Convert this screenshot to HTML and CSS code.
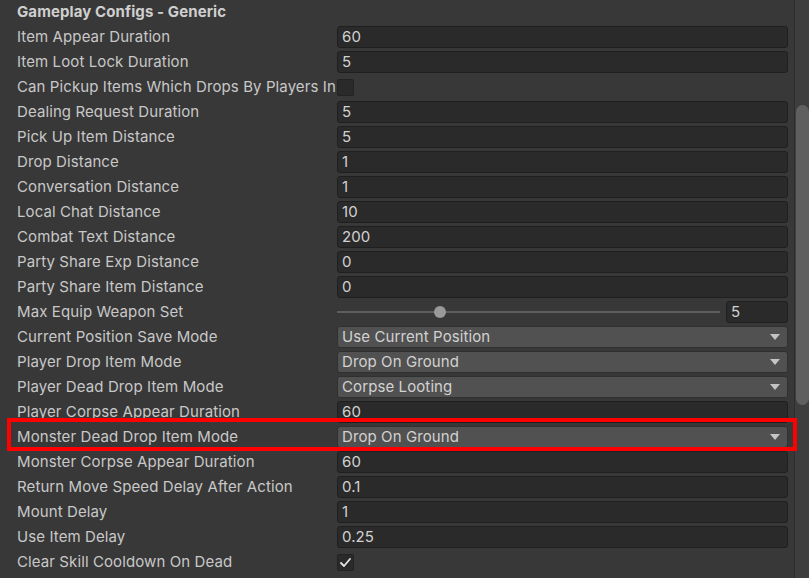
FILE: index.html
```html
<!DOCTYPE html>
<html>
<head>
<meta charset="utf-8">
<link rel="stylesheet" href="styles.css">
</head>
<body>
<div class="window">
  <div class="content">
    <div class="header">Gameplay Configs - Generic</div>
    <div class="row"><div class="label">Item Appear Duration</div><div class="field">60</div></div>
    <div class="row"><div class="label">Item Loot Lock Duration</div><div class="field">5</div></div>
    <div class="row"><div class="label">Can Pickup Items Which Drops By Players In</div><div class="check"></div></div>
    <div class="row"><div class="label">Dealing Request Duration</div><div class="field">5</div></div>
    <div class="row"><div class="label">Pick Up Item Distance</div><div class="field">5</div></div>
    <div class="row"><div class="label">Drop Distance</div><div class="field">1</div></div>
    <div class="row"><div class="label">Conversation Distance</div><div class="field">1</div></div>
    <div class="row"><div class="label">Local Chat Distance</div><div class="field">10</div></div>
    <div class="row"><div class="label">Combat Text Distance</div><div class="field">200</div></div>
    <div class="row"><div class="label">Party Share Exp Distance</div><div class="field">0</div></div>
    <div class="row"><div class="label">Party Share Item Distance</div><div class="field">0</div></div>
    <div class="row"><div class="label">Max Equip Weapon Set</div>
      <div class="slider"><div class="track"><div class="knob" style="left:27%"></div></div><div class="field small">5</div></div>
    </div>
    <div class="row"><div class="label">Current Position Save Mode</div><div class="dropdown">Use Current Position<span class="arrow"></span></div></div>
    <div class="row"><div class="label">Player Drop Item Mode</div><div class="dropdown">Drop On Ground<span class="arrow"></span></div></div>
    <div class="row"><div class="label">Player Dead Drop Item Mode</div><div class="dropdown">Corpse Looting<span class="arrow"></span></div></div>
    <div class="row"><div class="label">Player Corpse Appear Duration</div><div class="field">60</div></div>
    <div class="row highlight"><div class="label">Monster Dead Drop Item Mode</div><div class="dropdown">Drop On Ground<span class="arrow"></span></div></div>
    <div class="row"><div class="label">Monster Corpse Appear Duration</div><div class="field">60</div></div>
    <div class="row"><div class="label">Return Move Speed Delay After Action</div><div class="field">0.1</div></div>
    <div class="row"><div class="label">Mount Delay</div><div class="field">1</div></div>
    <div class="row"><div class="label">Use Item Delay</div><div class="field">0.25</div></div>
    <div class="row"><div class="label">Clear Skill Cooldown On Dead</div><div class="check checked"><svg width="17" height="17" viewBox="0 0 17 17"><path d="M4 9 L7 12 L13 5" fill="none" stroke="#e6e6e6" stroke-width="1.8" stroke-linecap="round" stroke-linejoin="round"/></svg></div></div>
  </div>
  <div class="scrollbar"><div class="thumb"></div></div>
</div>
</body>
</html>
```
FILE: styles.css
```css
html, body {
  margin: 0;
  padding: 0;
  background: #383838;
  width: 809px;
  height: 578px;
  overflow: hidden;
}
.window {
  display: flex;
  width: 809px;
  height: 578px;
  font-family: Inter, "Noto Sans", sans-serif;
  font-size: 15px;
  letter-spacing: 0.1px;
  color: #c8c8c8;
}
.content {
  flex: 1;
  padding: 1px 6px 0 17px;
  display: flex;
  flex-direction: column;
  gap: 3px;
}
.header {
  height: 22px;
  line-height: 22px;
  font-weight: 700;
  color: #cfcfcf;
}
.row {
  height: 22px;
  display: flex;
  align-items: center;
  position: relative;
}
.label {
  width: 320px;
  flex: none;
  white-space: nowrap;
  overflow: hidden;
  line-height: 22px;
}
.field {
  flex: 1;
  height: 22px;
  box-sizing: border-box;
  background: #2a2a2a;
  border: 1px solid #1f1f1f;
  border-radius: 3px;
  padding-left: 4px;
  line-height: 20px;
  color: #d2d2d2;
}
.field.small {
  flex: none;
  width: 62px;
}
.check {
  width: 17px;
  height: 17px;
  box-sizing: border-box;
  background: #2a2a2a;
  border: 1px solid #232323;
  border-radius: 2px;
  position: relative;
}
.check svg {
  position: absolute;
  left: -1px;
  top: -1px;
}
.slider {
  flex: 1;
  display: flex;
  align-items: center;
  gap: 6px;
}
.track {
  flex: 1;
  height: 2px;
  background: #5e5e5e;
  position: relative;
}
.knob {
  position: absolute;
  top: -5px;
  width: 12px;
  height: 12px;
  margin-left: -6px;
  border-radius: 50%;
  background: #999999;
}
.dropdown {
  flex: 1;
  height: 22px;
  box-sizing: border-box;
  background: #515151;
  border: 1px solid #303030;
  border-radius: 3px;
  padding-left: 4px;
  line-height: 20px;
  color: #d2d2d2;
  display: flex;
  justify-content: space-between;
  align-items: center;
}
.arrow {
  width: 0;
  height: 0;
  border-left: 5px solid transparent;
  border-right: 5px solid transparent;
  border-top: 6px solid #c4c4c4;
  margin-right: 7px;
}
.highlight::after {
  content: "";
  position: absolute;
  left: -10px;
  right: -9px;
  top: -8px;
  bottom: -3px;
  border: 4px solid #ff0000;
  pointer-events: none;
  z-index: 5;
}
.scrollbar {
  width: 14px;
  flex: none;
  background: #3e3e3e;
  border-left: 1px solid #2e2e2e;
  position: relative;
}
.thumb {
  position: absolute;
  left: 1px;
  right: 0;
  top: 105px;
  height: 300px;
  background: #5f5f5f;
  border-radius: 7px;
}
```
